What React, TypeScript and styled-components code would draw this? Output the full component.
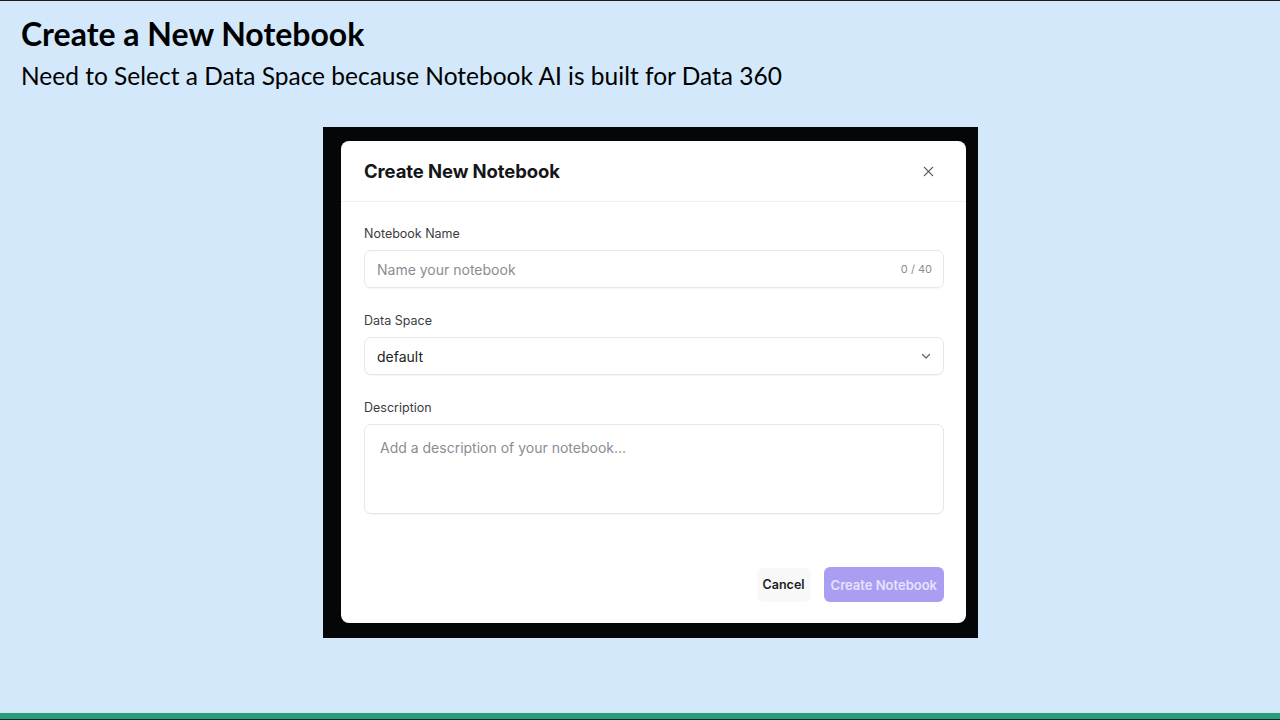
import React from 'react';
import styled, {createGlobalStyle} from 'styled-components';

const GlobalStyle = createGlobalStyle`
    html, body {
        margin: 0;
        padding: 0;
    }
    body {
        background: #d3e8fa;
    }
`;

const Slide = styled.div`
    width: 1280px;
    height: 720px;
    display: flex;
    flex-direction: column;
    background: #d3e8fa;
    border-top: 1px solid #1a1a1a;
    box-sizing: border-box;
    overflow: hidden;
`;

const SlideHeader = styled.div`
    padding: 14px 0 0 21px;
    font-family: Lato, "Open Sans", sans-serif;
    color: #000;
`;

const SlideTitle = styled.h1`
    margin: 0;
    font-size: 32px;
    font-weight: 700;
    line-height: 38px;
`;

const SlideSubtitle = styled.p`
    margin: 8px 0 0;
    font-size: 24.5px;
    line-height: 30px;
`;

const Stage = styled.div`
    flex: 1;
    display: flex;
    justify-content: center;
    padding-top: 36px;
`;

const ScreenFrame = styled.div`
    width: 655px;
    height: 511px;
    box-sizing: border-box;
    background: #050608;
    padding: 14px 12px 15px 18px;
    margin-left: 21px;
`;

const Dialog = styled.div`
    height: 100%;
    background: #fff;
    border-radius: 8px;
    display: flex;
    flex-direction: column;
    font-family: Inter, "Noto Sans", sans-serif;
`;

const DialogHeader = styled.div`
    height: 60px;
    display: flex;
    align-items: center;
    justify-content: space-between;
    padding: 0 32px 0 23px;
    border-bottom: 1px solid #f0f0f2;
`;

const DialogTitle = styled.h2`
    margin: 0;
    font-size: 18.5px;
    font-weight: 700;
    color: #14161a;
    letter-spacing: -0.1px;
`;

const CloseButton = styled.button`
    background: none;
    border: none;
    padding: 0;
    display: flex;
    color: #555;
    cursor: pointer;
`;

const DialogBody = styled.div`
    flex: 1;
    padding: 24px 22px 0 23px;
    display: flex;
    flex-direction: column;
    gap: 25px;
`;

const Field = styled.div`
    display: flex;
    flex-direction: column;
    gap: 9px;
`;

const Label = styled.label`
    font-size: 12.5px;
    color: #3a3d42;
    line-height: 15px;
`;

const InputBox = styled.div<{$tall?: boolean}>`
    height: ${p => (p.$tall ? '90px' : '38px')};
    box-sizing: border-box;
    border: 1px solid #e6e7ea;
    border-radius: 7px;
    display: flex;
    align-items: ${p => (p.$tall ? 'flex-start' : 'center')};
    justify-content: space-between;
    padding: ${p => (p.$tall ? '14px 15px' : '0 11px 0 12px')};
    box-shadow: 0 1px 1px rgba(0, 0, 0, 0.04);
`;

const Placeholder = styled.span`
    font-size: 14px;
    color: #8a8d93;
`;

const Value = styled.span`
    font-size: 14px;
    color: #1b1d21;
`;

const Counter = styled.span`
    font-size: 11px;
    color: #8a8d93;
`;

const DialogFooter = styled.div`
    display: flex;
    justify-content: flex-end;
    align-items: center;
    gap: 13px;
    padding: 0 22px 21px;
`;

const CancelButton = styled.button`
    height: 34px;
    padding: 0 6px;
    border: none;
    border-radius: 6px;
    background: #f8f8f9;
    font-family: Inter, "Noto Sans", sans-serif;
    font-size: 12.5px;
    font-weight: 600;
    color: #1b1d21;
`;

const PrimaryButton = styled.button`
    height: 35px;
    padding: 0 7px;
    border: none;
    border-radius: 6px;
    background: #aa9ef2;
    font-family: Inter, "Noto Sans", sans-serif;
    font-size: 13px;
    font-weight: 600;
    color: #e6e2ff;
`;

const BottomBar = styled.div`
    height: 6px;
    background: #279c7f;
    border-top: 1px solid #bff0ec;
    border-bottom: 1px solid #0d2a22;
`;

const App: React.FC = () => {
    return (
        <>
            <GlobalStyle/>
            <Slide>
                <SlideHeader>
                    <SlideTitle>Create a New Notebook</SlideTitle>
                    <SlideSubtitle>Need to Select a Data Space because Notebook AI is built for Data 360</SlideSubtitle>
                </SlideHeader>

                <Stage>
                    <ScreenFrame>
                        <Dialog>
                            <DialogHeader>
                                <DialogTitle>Create New Notebook</DialogTitle>
                                <CloseButton aria-label="Close">
                                    <svg width="11" height="11" viewBox="0 0 12 12" fill="none" stroke="currentColor" strokeWidth="1.4" strokeLinecap="round">
                                        <path d="M1.5 1.5l9 9M10.5 1.5l-9 9"/>
                                    </svg>
                                </CloseButton>
                            </DialogHeader>

                            <DialogBody>
                                <Field>
                                    <Label>Notebook Name</Label>
                                    <InputBox>
                                        <Placeholder>Name your notebook</Placeholder>
                                        <Counter>0 / 40</Counter>
                                    </InputBox>
                                </Field>

                                <Field>
                                    <Label>Data Space</Label>
                                    <InputBox>
                                        <Value>default</Value>
                                        <svg width="12" height="12" viewBox="0 0 12 12" fill="none" stroke="#666" strokeWidth="1.3" strokeLinecap="round" strokeLinejoin="round">
                                            <path d="M2.5 4.5L6 8l3.5-3.5"/>
                                        </svg>
                                    </InputBox>
                                </Field>

                                <Field>
                                    <Label>Description</Label>
                                    <InputBox $tall>
                                        <Placeholder>Add a description of your notebook...</Placeholder>
                                    </InputBox>
                                </Field>
                            </DialogBody>

                            <DialogFooter>
                                <CancelButton>Cancel</CancelButton>
                                <PrimaryButton>Create Notebook</PrimaryButton>
                            </DialogFooter>
                        </Dialog>
                    </ScreenFrame>
                </Stage>

                <BottomBar/>
            </Slide>
        </>
    );
};

export default App;
